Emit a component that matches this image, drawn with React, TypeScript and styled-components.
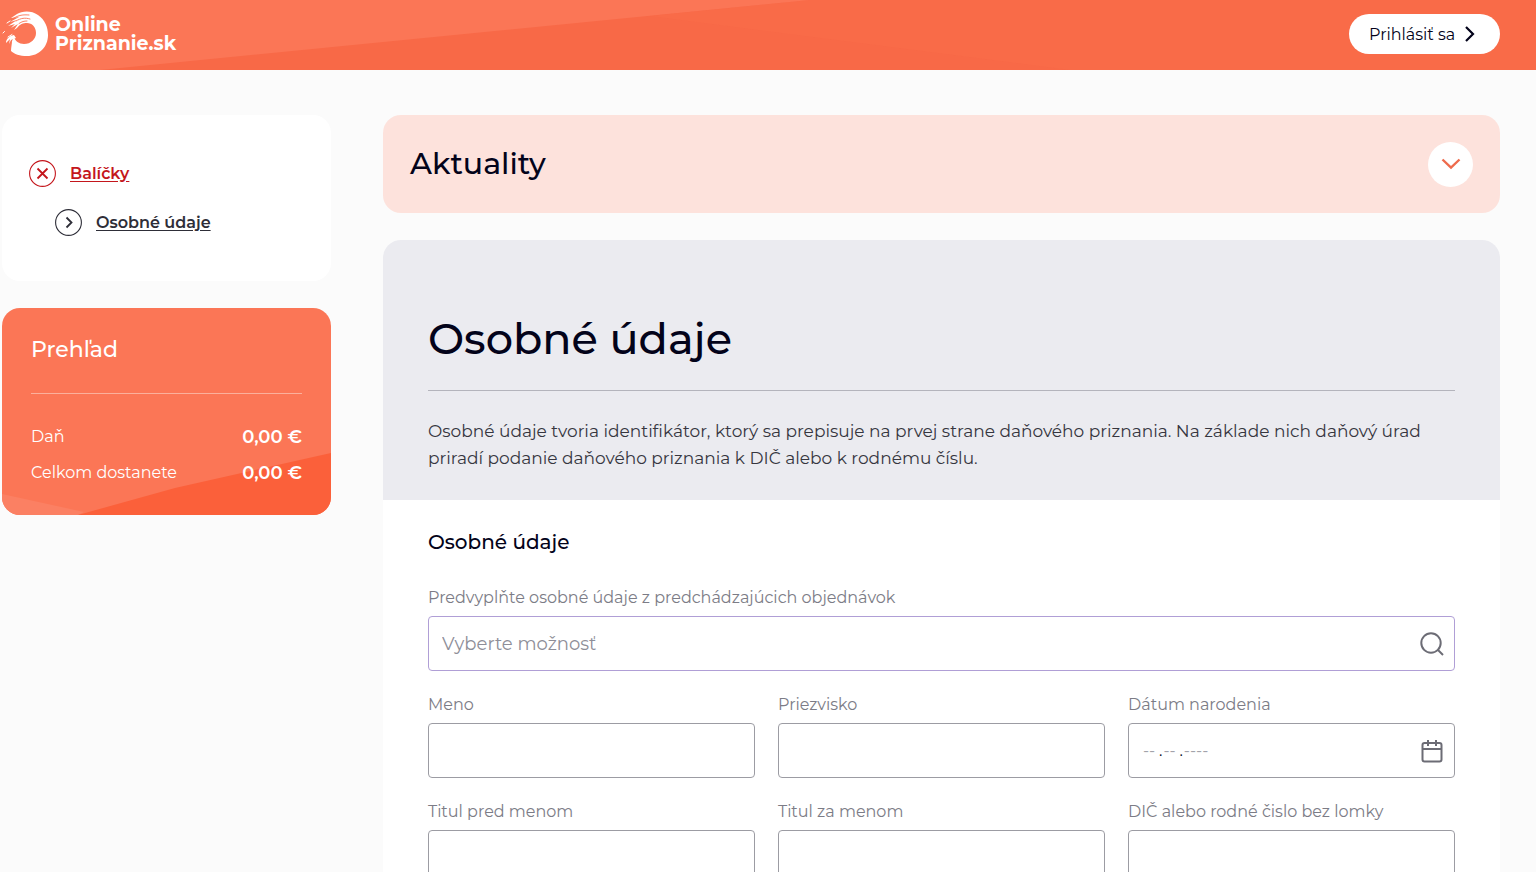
import React from "react";
import styled, { createGlobalStyle } from "styled-components";

const GlobalStyle = createGlobalStyle`
  *, *::before, *::after { box-sizing: border-box; }
  body {
    margin: 0;
    background: #fbfbfb;
    color: #03031a;
    font-family: Montserrat, Inter, "Liberation Sans", sans-serif;
    font-size: 16px;
  }
  h1, h2, p, ul, dl, dd { margin: 0; padding: 0; }
  button, input { font: inherit; color: inherit; }
`;

const Header = styled.header`
  position: relative;
  display: flex;
  align-items: center;
  justify-content: space-between;
  height: 70px;
  padding: 0 36px 2px 2px;
  background: #f86947;
`;

const Backdrop = styled.svg`
  position: absolute;
  inset: 0;
  width: 100%;
  height: 100%;
`;

const Logo = styled.a`
  position: relative;
  display: flex;
  align-items: center;
  gap: 6px;
  color: #fff;
  font-size: 19px;
  font-weight: 700;
  line-height: 19px;
  text-decoration: none;
`;

const LogoName = styled.span`
  display: flex;
  flex-direction: column;
`;

const LoginButton = styled.button`
  position: relative;
  display: flex;
  align-items: center;
  justify-content: space-between;
  width: 151px;
  height: 40px;
  padding: 0 22px 0 20px;
  border: 0;
  border-radius: 20px;
  background: #fff;
  font-size: 16px;
`;

const Page = styled.div`
  display: grid;
  grid-template-columns: 329px minmax(0, 1fr);
  align-items: start;
  gap: 52px;
  padding: 45px 36px 45px 2px;
`;

const Sidebar = styled.aside`
  display: flex;
  flex-direction: column;
  gap: 27px;
`;

const StepsCard = styled.nav`
  padding: 45px 27px;
  border-radius: 18px;
  background: #fff;
`;

const StepList = styled.ul`
  display: flex;
  flex-direction: column;
  gap: 22px;
  list-style: none;
`;

const Step = styled.li<{ $nested?: boolean; $tone: string }>`
  display: flex;
  align-items: center;
  gap: 14px;
  padding-left: ${(p) => (p.$nested ? 26 : 0)}px;
  color: ${(p) => p.$tone};
`;

const StepIcon = styled.svg`
  width: 27px;
  height: 27px;
  fill: none;
  stroke: currentColor;
`;

const StepLink = styled.a`
  color: inherit;
  font-size: 16px;
  font-weight: 600;
  line-height: 20px;
  text-underline-offset: 2px;
`;

const Overview = styled.section`
  position: relative;
  height: 207px;
  padding: 27px 29px;
  border-radius: 18px;
  overflow: hidden;
  background: #fb7656;
  color: #fff;
`;

const OverviewTitle = styled.h2`
  position: relative;
  padding-bottom: 28px;
  border-bottom: 1px solid #fbb09c;
  font-size: 22px;
  font-weight: 500;
  line-height: 30px;
`;

const Totals = styled.dl`
  position: relative;
  display: flex;
  flex-direction: column;
  gap: 12px;
  padding-top: 31px;
`;

const TotalRow = styled.div`
  display: flex;
  justify-content: space-between;
  line-height: 24px;
`;

const Amount = styled.dd`
  font-size: 18px;
  font-weight: 600;
`;

const Main = styled.main`
  display: flex;
  flex-direction: column;
  gap: 27px;
`;

const News = styled.section`
  display: flex;
  align-items: center;
  justify-content: space-between;
  height: 98px;
  padding: 0 27px;
  border-radius: 18px;
  background: #fde2dc;
`;

const NewsTitle = styled.h2`
  font-size: 30px;
  font-weight: 500;
  line-height: 40px;
`;

const RoundButton = styled.button`
  display: grid;
  place-items: center;
  width: 45px;
  height: 45px;
  padding: 0;
  border: 0;
  border-radius: 50%;
  background: #fff;
`;

const FormCard = styled.section`
  border-radius: 18px;
  overflow: hidden;
  background: #fff;
`;

const FormHead = styled.div`
  padding: 71px 45px 28px;
  background: #ebebf0;
`;

const Title = styled.h1`
  padding-bottom: 23px;
  border-bottom: 1px solid #b4b4bc;
  font-size: 43px;
  font-weight: 500;
  line-height: 56px;
`;

const Intro = styled.p`
  padding-top: 27px;
  color: #36363f;
  font-size: 17px;
  line-height: 27px;
`;

const Form = styled.form`
  padding: 29px 45px 45px;
`;

const SectionTitle = styled.h2`
  padding-bottom: 33px;
  font-size: 20px;
  font-weight: 500;
  line-height: 26px;
`;

const FieldGrid = styled.div`
  display: grid;
  grid-template-columns: repeat(3, minmax(0, 1fr));
  gap: 24px 23px;
`;

const Field = styled.div<{ $wide?: boolean }>`
  display: flex;
  flex-direction: column;
  gap: 8px;
  grid-column: ${(p) => (p.$wide ? "1 / -1" : "auto")};
`;

const Label = styled.label`
  color: #7c7c86;
  font-size: 16px;
  line-height: 20px;
`;

const Control = styled.div<{ $accent?: boolean }>`
  display: flex;
  align-items: center;
  height: 55px;
  padding: 0 10px 0 13px;
  border: 1px solid ${(p) => (p.$accent ? "#b09fd6" : "#9c9ca3")};
  border-radius: 4px;
  background: #fff;
`;

const TextInput = styled.input`
  flex: 1;
  min-width: 0;
  height: 100%;
  padding: 0;
  border: 0;
  outline: 0;
  background: none;
  font-size: 18px;
  &::placeholder { color: #8e8e98; opacity: 1; }
`;

const DateParts = styled.div`
  display: flex;
  flex: 1;
  align-items: center;
  gap: 1px;
  padding-left: 1px;
`;

const DateInput = styled.input<{ $year?: boolean }>`
  width: ${(p) => (p.$year ? 40 : 15)}px;
  padding: 0;
  border: 0;
  outline: 0;
  background: none;
  font-size: 16px;
  &::placeholder { color: #a2a2aa; opacity: 1; }
`;

const FieldIcon = styled.svg`
  width: 24px;
  height: 24px;
  fill: none;
  stroke: #6c6c75;
  stroke-width: 2;
`;

function TextField({ id, label }: { id: string; label: string }) {
  return (
    <Field>
      <Label htmlFor={id}>{label}</Label>
      <Control>
        <TextInput id={id} type="text" />
      </Control>
    </Field>
  );
}

function LogoMark() {
  return (
    <svg width="47" height="46" viewBox="0 0 47 46" aria-hidden="true">
      <path
        fill="#fff"
        d="M15 3C20 0 29 -1 36 4C43 9 46 16 46 24C46 36 37 45 25 45C18 45 12 43 9 40C9 36 10 33 10 30L12 26C13 30 17 33 22 33C29 33 34 28 34 22C34 16 30 12 25 12C21 12 18 13 15 17L12 19L16 13L9 17L13 13L6 15L15 9L8 11L17 6L9 7Z"
      />
      <g fill="none" stroke="#fb7656" strokeWidth="0.9" strokeLinecap="round">
        <path d="M11 7.500C17 4 21 3.500 27 4M14 10C19 7 23 6.500 28 8M17 12.500C20 10.500 22 10 25 10" />
      </g>
      <path fill="#fff" d="M4 32C4 28 7 25 12 24L14 27L9 29L7 33L8 28Z" />
      <path fill="none" stroke="#fff" strokeWidth="1" strokeLinecap="round" d="M1 22L2.500 20.500M6 26L10 23.500M5 12L8 10" />
    </svg>
  );
}

export default function App() {
  return (
    <>
      <GlobalStyle />
      <Header>
        <Backdrop viewBox="0 0 1536 70" preserveAspectRatio="none" aria-hidden="true">
          <path fill="#fb7656" d="M0 0H810L100 70H0Z" />
          <path fill="#f96d4b" d="M810 0H1536V70H1070L650 16Z" opacity=".4" />
        </Backdrop>
        <Logo href="#">
          <LogoMark />
          <LogoName>
            <span>Online</span>
            <span>Priznanie.sk</span>
          </LogoName>
        </Logo>
        <LoginButton type="button">
          Prihlásiť sa
          <svg width="16" height="16" viewBox="0 0 16 16" fill="none" stroke="currentColor" strokeWidth="2.2" aria-hidden="true">
            <path d="M4 1L11 8L4 15" />
          </svg>
        </LoginButton>
      </Header>
      <Page>
        <Sidebar>
          <StepsCard aria-label="Kroky">
            <StepList>
              <Step $tone="#c4161c">
                <StepIcon viewBox="0 0 27 27" aria-hidden="true">
                  <circle cx="13.5" cy="13.5" r="12.9" strokeWidth="1.1" />
                  <path strokeWidth="1.8" d="M8.500 8.500L18.500 18.500M18.500 8.500L8.500 18.500" />
                </StepIcon>
                <StepLink href="#balicky">Balíčky</StepLink>
              </Step>
              <Step $nested $tone="#2e2e38">
                <StepIcon viewBox="0 0 27 27" aria-hidden="true">
                  <circle cx="13.5" cy="13.5" r="12.9" strokeWidth="1.1" />
                  <path strokeWidth="1.8" d="M11.500 8.500L16.500 13.500L11.500 18.500" />
                </StepIcon>
                <StepLink href="#osobne-udaje">Osobné údaje</StepLink>
              </Step>
            </StepList>
          </StepsCard>
          <Overview>
            <Backdrop viewBox="0 0 329 207" preserveAspectRatio="none" aria-hidden="true">
              <path fill="#fb8063" d="M0 186L82 204L76 207H0Z" />
              <path fill="#fb603a" d="M76 207L173 180L329 145V207Z" />
            </Backdrop>
            <OverviewTitle>Prehľad</OverviewTitle>
            <Totals>
              <TotalRow>
                <dt>Daň</dt>
                <Amount>0,00 €</Amount>
              </TotalRow>
              <TotalRow>
                <dt>Celkom dostanete</dt>
                <Amount>0,00 €</Amount>
              </TotalRow>
            </Totals>
          </Overview>
        </Sidebar>
        <Main>
          <News>
            <NewsTitle>Aktuality</NewsTitle>
            <RoundButton type="button" aria-label="Rozbaliť aktuality">
              <svg width="20" height="12" viewBox="0 0 20 12" fill="none" stroke="#ee6b4d" strokeWidth="2.4" aria-hidden="true">
                <path d="M1.500 1.500L10 9.500L18.500 1.500" />
              </svg>
            </RoundButton>
          </News>
          <FormCard id="osobne-udaje">
            <FormHead>
              <Title>Osobné údaje</Title>
              <Intro>
                Osobné údaje tvoria identifikátor, ktorý sa prepisuje na prvej strane daňového priznania. Na
                základe nich daňový úrad priradí podanie daňového priznania k DIČ alebo k rodnému číslu.
              </Intro>
            </FormHead>
            <Form>
              <SectionTitle>Osobné údaje</SectionTitle>
              <FieldGrid>
                <Field $wide>
                  <Label htmlFor="prefill">Predvyplňte osobné údaje z predchádzajúcich objednávok</Label>
                  <Control $accent>
                    <TextInput id="prefill" type="text" role="combobox" aria-expanded="false" placeholder="Vyberte možnosť" />
                    <FieldIcon viewBox="0 0 24 24" aria-hidden="true">
                      <circle cx="11" cy="11" r="9.7" />
                      <path d="M17.500 17.500L23 23" />
                    </FieldIcon>
                  </Control>
                </Field>
                <TextField id="first-name" label="Meno" />
                <TextField id="last-name" label="Priezvisko" />
                <Field>
                  <Label htmlFor="birth-day">Dátum narodenia</Label>
                  <Control>
                    <DateParts>
                      <DateInput id="birth-day" placeholder="--" maxLength={2} />
                      <span>.</span>
                      <DateInput aria-label="Mesiac" placeholder="--" maxLength={2} />
                      <span>.</span>
                      <DateInput $year aria-label="Rok" placeholder="----" maxLength={4} />
                    </DateParts>
                    <FieldIcon viewBox="0 0 24 24" aria-hidden="true">
                      <rect x="2.5" y="4" width="19" height="18.5" rx="2" />
                      <path d="M2.500 10H21.500M8 1V7M16 1V7" />
                    </FieldIcon>
                  </Control>
                </Field>
                <TextField id="title-before" label="Titul pred menom" />
                <TextField id="title-after" label="Titul za menom" />
                <TextField id="tax-id" label="DIČ alebo rodné čislo bez lomky" />
              </FieldGrid>
            </Form>
          </FormCard>
        </Main>
      </Page>
    </>
  );
}
